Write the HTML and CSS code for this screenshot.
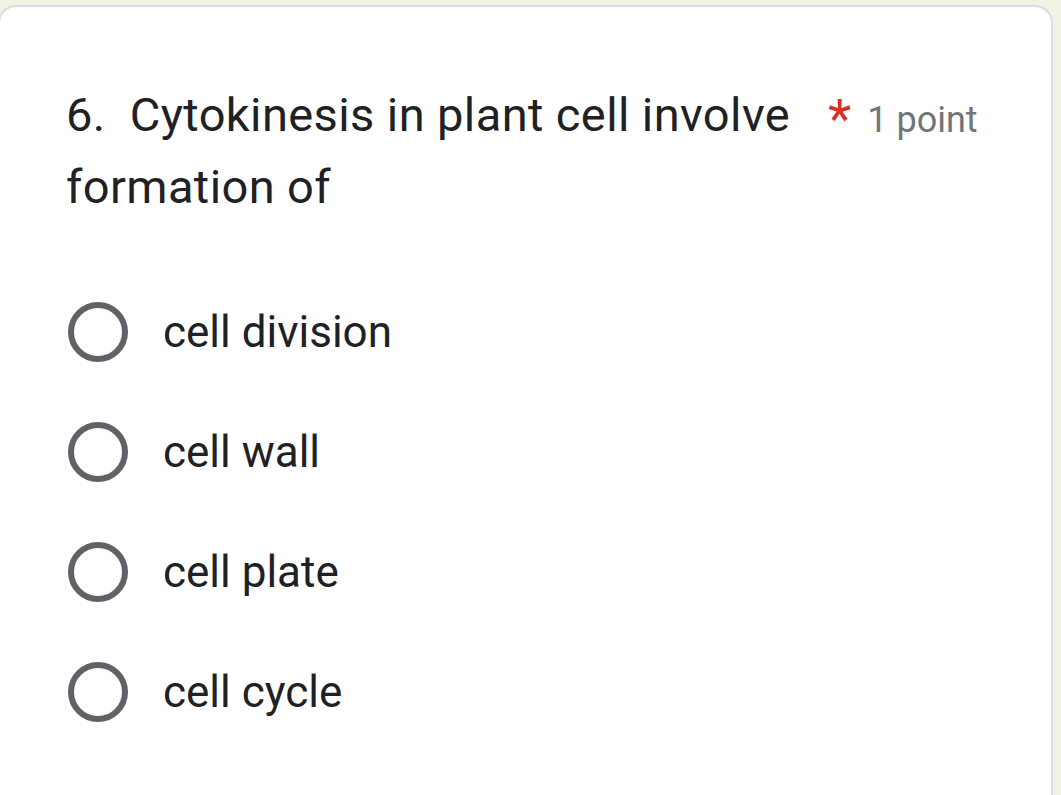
FILE: index.html
```html
<!DOCTYPE html>
<html>
<head>
<meta charset="utf-8">
<link rel="stylesheet" href="styles.css">
</head>
<body>
<div class="card">
  <div class="header">
    <div class="title">6.&nbsp; Cytokinesis in plant cell involve formation of</div>
    <span class="req">*</span>
    <span class="points">1 point</span>
  </div>
  <div class="options">
    <div class="option"><span class="radio"></span><span class="label">cell division</span></div>
    <div class="option"><span class="radio"></span><span class="label">cell wall</span></div>
    <div class="option"><span class="radio"></span><span class="label">cell plate</span></div>
    <div class="option"><span class="radio"></span><span class="label">cell cycle</span></div>
  </div>
</div>
</body>
</html>
```

FILE: styles.css
```css
html, body {
  margin: 0;
  height: 100%;
  overflow: hidden;
}
body {
  background: #f2f2e5;
  padding-top: 5px;
  font-family: Roboto, "Noto Sans", sans-serif;
  color: #202124;
  box-sizing: border-box;
}
.card {
  background: #fff;
  border: 2px solid #dadce0;
  border-bottom: none;
  border-radius: 18px 18px 0 0;
  margin-left: -2px;
  margin-right: 8px;
  height: 100%;
  padding: 72px 0 0 66px;
  box-sizing: border-box;
}
.header {
  display: flex;
  align-items: flex-start;
}
.title {
  width: 756px;
  font-size: 47px;
  line-height: 72px;
  letter-spacing: 0.4px;
}
.req {
  color: #d93025;
  font-size: 54px;
  line-height: 72px;
  margin-left: 6px;
  position: relative;
  top: 4px;
}
.points {
  color: #70757a;
  font-size: 36px;
  line-height: 72px;
  margin-left: 16px;
  position: relative;
  top: 5px;
}
.options {
  margin-top: 49px;
  display: flex;
  flex-direction: column;
}
.option {
  height: 120px;
  display: flex;
  align-items: center;
}
.radio {
  width: 60px;
  height: 60px;
  border: 6px solid #5f6368;
  border-radius: 50%;
  box-sizing: border-box;
  margin-left: 2px;
  flex: none;
}
.label {
  margin-left: 35px;
  font-size: 44px;
}
```
